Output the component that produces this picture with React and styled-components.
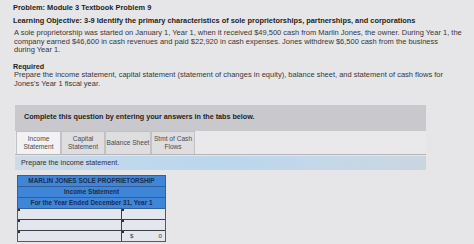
import React from "react";
import styled, { createGlobalStyle } from "styled-components";

const Global = createGlobalStyle`
  html, body { margin: 0; padding: 0; }
  body {
    width: 474px;
    height: 244px;
    overflow: hidden;
    background: #e6e6e8;
    font-family: "Liberation Sans", Arial, sans-serif;
    color: #2a2a2e;
  }
`;

const Page = styled.div`
  padding: 1px 10px 0 13px;
`;

const Title = styled.div`
  font-weight: bold;
  font-size: 7.4px;
  line-height: 13px;
  white-space: nowrap;
  color: #1e1e22;
`;

const Para = styled.p`
  margin: ${({ $top }) => $top || 0}px 0 0 1px;
  font-size: 7.5px;
  line-height: 8.7px;
  white-space: nowrap;
  color: #36363a;
`;

const Label = styled.div`
  margin-top: 7px;
  font-weight: bold;
  font-size: 7.2px;
  line-height: 9px;
  color: #1e1e22;
`;

const Panel = styled.div`
  margin: 16px 0 0 2px;
  width: 411px;
`;

const Instruction = styled.div`
  background: #c9c9cd;
  height: 26px;
  padding: 7px 0 0 9px;
  line-height: 9px;
  box-sizing: border-box;
  font-weight: bold;
  font-size: 7.2px;
  color: #1e1e24;
`;

const TabBar = styled.div`
  display: flex;
  background: #e9e9eb;
  border-bottom: 1px solid #b4b4b8;
  padding-left: 1px;
`;

const Tab = styled.div`
  width: ${({ $w }) => $w}px;
  height: 23px;
  display: flex;
  align-items: center;
  justify-content: center;
  text-align: center;
  white-space: pre;
  font-size: 6.6px;
  line-height: 8px;
  color: #4a4a50;
  box-sizing: border-box;
  border: 1px solid #c2c2c6;
  border-bottom: none;
  background: ${({ $active }) => ($active ? "#f2f2f4" : "#dedee0")};
`;

const Band = styled.div`
  margin-top: 1px;
  height: 14px;
  padding-left: 6px;
  display: flex;
  align-items: center;
  font-size: 7.2px;
  color: #2e2e34;
  background: linear-gradient(90deg, #cfdbe4 0%, #c2d9ec 20%, #bcd6ec 50%, #c4d8e8 75%, #cad6df 100%);
`;

const Table = styled.div`
  margin: 5px 0 0 2px;
  width: 147px;
  border: 1px solid #3f5f8a;
`;

const HeadRow = styled.div`
  height: 10px;
  display: flex;
  align-items: center;
  justify-content: center;
  font-size: 6.4px;
  font-weight: bold;
  color: #1c2c4c;
  background: #3f86d8;
  border-bottom: 1px solid #2f5f9c;
`;

const Row = styled.div`
  display: grid;
  grid-template-columns: 104px 1fr;
  height: 10px;
  border-bottom: 1px solid #3a3e4a;
  &:last-child { border-bottom: none; }
`;

const Cell = styled.div`
  position: relative;
  background: #e4e6ee;
  border-right: ${({ $right }) => ($right ? "none" : "1px solid #3a3e4a")};
  display: flex;
  align-items: center;
  justify-content: space-between;
  padding: 0 3px 0 8px;
  font-size: 6.2px;
  color: #3a3a40;
  &::before {
    content: "";
    position: absolute;
    left: 0;
    top: 0;
    width: 2px;
    height: 2px;
    background: #2a2e3a;
  }
`;

const tabs = [
  { label: "Income\nStatement", w: 45, active: true },
  { label: "Capital\nStatement", w: 44 },
  { label: "Balance Sheet", w: 46 },
  { label: "Stmt of Cash\nFlows", w: 44 },
];

export default function App() {
  return (
    <Page>
      <Global />
      <Title>Problem: Module 3 Textbook Problem 9</Title>
      <Title>
        Learning Objective: 3-9 Identify the primary characteristics of sole proprietorships, partnerships, and corporations
      </Title>
      <Para $top={2}>
        A sole proprietorship was started on January 1, Year 1, when it received $49,500 cash from Marlin Jones, the owner. During Year 1, the
        <br />
        company earned $46,600 in cash revenues and paid $22,920 in cash expenses. Jones withdrew $6,500 cash from the business
        <br />
        during Year 1.
      </Para>
      <Label>Required</Label>
      <Para>
        Prepare the income statement, capital statement (statement of changes in equity), balance sheet, and statement of cash flows for
        <br />
        Jones's Year 1 fiscal year.
      </Para>
      <Panel>
        <Instruction>Complete this question by entering your answers in the tabs below.</Instruction>
        <TabBar>
          {tabs.map((t) => (
            <Tab key={t.label} $w={t.w} $active={t.active}>
              {t.label}
            </Tab>
          ))}
        </TabBar>
        <Band>Prepare the income statement.</Band>
        <Table>
          <HeadRow>MARLIN JONES SOLE PROPRIETORSHIP</HeadRow>
          <HeadRow>Income Statement</HeadRow>
          <HeadRow>For the Year Ended December 31, Year 1</HeadRow>
          <Row>
            <Cell />
            <Cell $right />
          </Row>
          <Row>
            <Cell />
            <Cell $right />
          </Row>
          <Row>
            <Cell />
            <Cell $right>
              <span>$</span>
              <span>0</span>
            </Cell>
          </Row>
        </Table>
      </Panel>
    </Page>
  );
}
